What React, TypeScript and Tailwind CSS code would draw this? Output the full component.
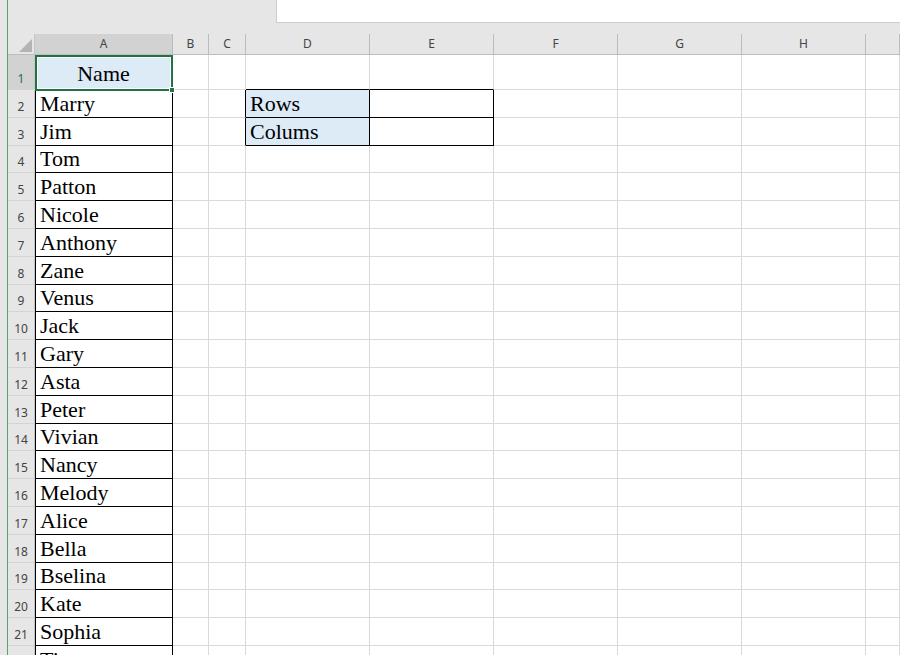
import clsx from "clsx";

const names = [
  "Marry", "Jim", "Tom", "Patton", "Nicole", "Anthony", "Zane", "Venus", "Jack", "Gary",
  "Asta", "Peter", "Vivian", "Nancy", "Melody", "Alice", "Bella", "Bselina", "Kate", "Sophia", "Tina",
];

const cols = [
  { key: "A", w: "w-[138px]" },
  { key: "B", w: "w-[36px]" },
  { key: "C", w: "w-[37px]" },
  { key: "D", w: "w-[124px]" },
  { key: "E", w: "w-[124px]" },
  { key: "F", w: "w-[124px]" },
  { key: "G", w: "w-[124px]" },
  { key: "H", w: "w-[124px]" },
  { key: "I", w: "flex-1" },
];

const serif = "font-['Liberation_Serif','Times_New_Roman',serif]";
const sans = "font-['Noto_Sans','Open_Sans',sans-serif]";

function borders(row: number, col: string) {
  const inTable = (col === "D" || col === "E") && (row === 2 || row === 3);
  const blackLeft = col === "A" && row >= 2;
  const blackRight = (col === "A" && row >= 2) || inTable || (col === "C" && (row === 2 || row === 3));
  const blackBottom = (col === "A" && row >= 2) || inTable || ((col === "D" || col === "E") && row === 1);
  return clsx(
    "border-r border-b",
    blackLeft && "border-l border-l-black",
    blackRight ? "border-r-black" : "border-r-[#dadada]",
    blackBottom ? "border-b-black" : "border-b-[#dadada]"
  );
}

function cellText(row: number, col: string) {
  if (col === "A") return row === 1 ? "Name" : names[row - 2];
  if (col === "D" && row === 2) return "Rows";
  if (col === "D" && row === 3) return "Colums";
  return "";
}

function Row({ row }: { row: number }) {
  const first = row === 1;
  return (
    <div className={clsx("flex shrink-0", first ? "h-[35px]" : "h-[27.8px]")}>
      <div
        className={clsx(
          "w-[27px] shrink-0 border-r border-b border-r-[#c6c6c6] border-b-[#d4d4d4] flex items-end justify-center pb-[4px] text-[12px] leading-none",
          sans,
          first ? "bg-[#d2d2d2] text-[#217346]" : "bg-[#e6e6e6] text-[#444]"
        )}
      >
        {row}
      </div>
      {cols.map((c) => {
        const text = cellText(row, c.key);
        const blue = (c.key === "A" && first) || (c.key === "D" && (row === 2 || row === 3));
        return (
          <div
            key={c.key}
            className={clsx(
              c.w,
              "shrink-0 relative flex items-end overflow-visible whitespace-nowrap text-[22px] leading-[24px] text-black",
              serif,
              borders(row, c.key),
              blue ? "bg-[#ddebf7]" : "bg-white",
              first ? "justify-center pb-[3px]" : "pl-[4px] pb-[1px]"
            )}
          >
            {text}
            {c.key === "A" && first && (
              <>
                <div className="absolute z-10 left-0 top-0 -right-[1px] -bottom-[2px] border-2 border-[#217346] shadow-[inset_0_0_0_1px_white] pointer-events-none" />
                <div className="absolute z-20 -right-[3px] -bottom-[4px] w-[6px] h-[6px] bg-[#217346] border border-white" />
              </>
            )}
          </div>
        );
      })}
    </div>
  );
}

export default function App() {
  const rows = Array.from({ length: 22 }, (_, i) => i + 1);

  return (
    <div className="w-[900px] h-[655px] overflow-hidden bg-[#e6e6e6] flex">
      <div className="w-[7px] shrink-0" />
      <div className="flex-1 flex flex-col border-l border-[#5b9f72] min-w-0">
        {/* formula bar strip */}
        <div className="h-[23px] shrink-0 flex">
          <div className="ml-[268px] flex-1 bg-white border-l border-b border-[#cdcdcd]" />
        </div>
        <div className="h-[11px] shrink-0" />

        {/* column headers */}
        <div className={clsx("h-[21px] shrink-0 flex text-[12px] text-[#444]", sans)}>
          <div className="w-[27px] shrink-0 border-r border-b border-r-[#c6c6c6] border-b-[#bdbdbd] flex items-end justify-end pr-[2px] pb-[2px]">
            <svg width="13" height="13" viewBox="0 0 13 13">
              <polygon points="13,0 13,13 0,13" fill="#b4b4b4" />
            </svg>
          </div>
          {cols.map((c) => (
            <div
              key={c.key}
              className={clsx(
                c.w,
                "shrink-0 flex items-center justify-center border-r border-b border-r-[#bcbcbc] border-b-[#bdbdbd]",
                c.key === "A" ? "bg-[#d2d2d2]" : "bg-[#e6e6e6]"
              )}
            >
              {c.key !== "I" ? c.key : ""}
            </div>
          ))}
        </div>

        {rows.map((r) => (
          <Row key={r} row={r} />
        ))}
      </div>
    </div>
  );
}
